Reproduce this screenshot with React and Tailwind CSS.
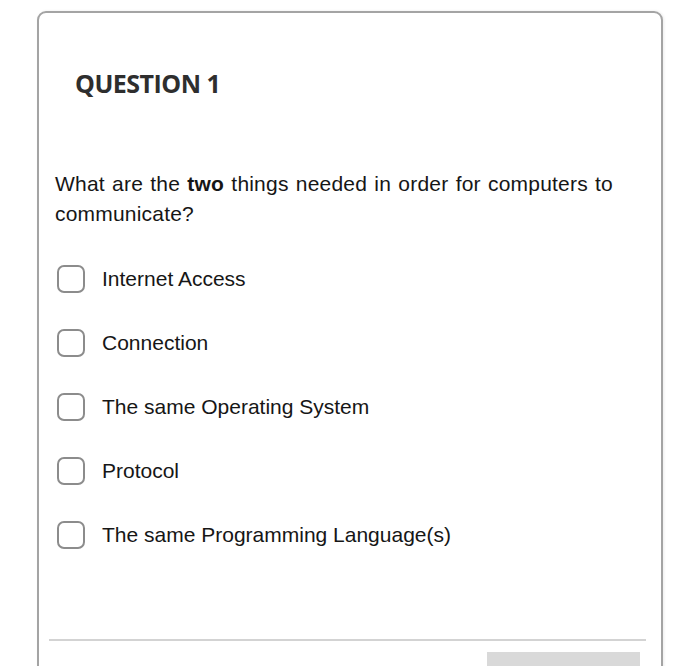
const options = [
  'Internet Access',
  'Connection',
  'The same Operating System',
  'Protocol',
  'The same Programming Language(s)',
];

export default function App() {
  return (
    <div className="h-[666px] w-[700px] overflow-hidden bg-white">
      <div className="ml-[37px] mt-[11px] h-[700px] w-[626px] rounded-[9px] border-2 border-[#a4a4a4] shadow-[1px_0_3px_rgba(0,0,0,0.08)]">
        <h1
          className="ml-[36px] mt-[52px] text-[25px] leading-[36px] font-bold tracking-[-0.5px] text-[#2e2e2e]"
          style={{ fontFamily: '"Open Sans", sans-serif' }}
        >
          QUESTION 1
        </h1>
        <div className="px-[16px] font-['Liberation_Sans',Arial,sans-serif] text-[#161616]">
          <p className="mt-[68px] w-[558px] text-justify text-[21px] leading-[30px] tracking-[0.2px]">
            What are the <b>two</b> things needed in order for computers to communicate?
          </p>
          <ul className="mt-[36px] flex flex-col gap-[36px] pl-[2px]">
            {options.map((opt) => (
              <li key={opt} className="flex items-center gap-[17px] text-[21px] leading-[28px]">
                <span className="h-[28px] w-[28px] shrink-0 rounded-[7px] border-2 border-[#8c8c8c]" />
                <span>{opt}</span>
              </li>
            ))}
          </ul>
          <div className="mt-[90px] mr-[-1px] ml-[-6px] h-[2px] bg-[#d3d3d3]" />
          <div className="mt-[11px] flex justify-end pr-[5px]">
            <div className="h-[40px] w-[153px] bg-[#d9d9d9]" />
          </div>
        </div>
      </div>
    </div>
  );
}
